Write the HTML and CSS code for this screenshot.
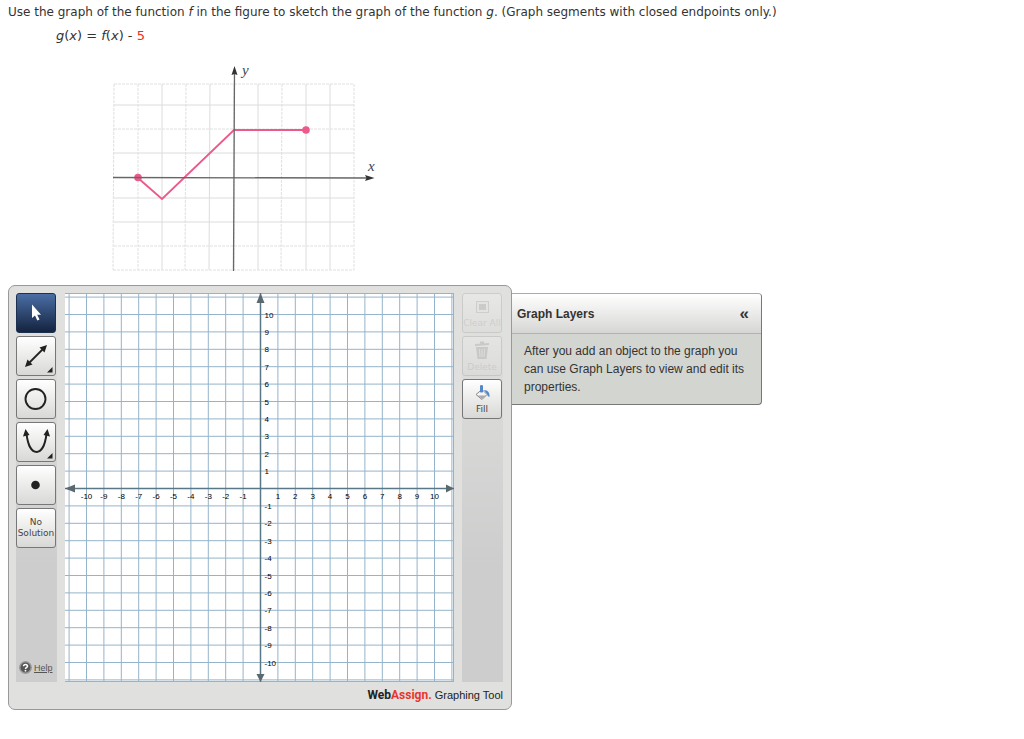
FILE: index.html
```html
<!DOCTYPE html>
<html lang="en">
<head>
  <meta charset="UTF-8">
  <meta name="viewport" content="width=device-width, initial-scale=1.0">
  <title>Graphing Tool</title>
  <link rel="stylesheet" href="styles.css">
</head>
<body>
  <div class="question">
    <p>Use the graph of the function <i>f</i> in the figure to sketch the graph of the function <i>g</i>. (Graph segments with closed endpoints only.)</p>
    <p class="formula"><i>g</i>(<i>x</i>) = <i>f</i>(<i>x</i>) - <span class="num">5</span></p>
    <svg class="figure" viewBox="0 0 290 220" role="img" aria-label="Graph of f">
      <g class="fig-grid">
        <path d="M62 24V210M110 24L109 210M158 24V210M206 24V210M230 24V210M14 45H254M14 93H254M14 138H254M14 162H254"/>
        <path class="faint" d="M14 24L13 210M38 24V210M86 24L85 210M134 24V210M182 24L181 210M254 24V210M14 24H254M14 69H254M14 186H254M13 210H254"/>
      </g>
      <path class="fig-line" d="M38 118L62 139L134 70L206 70"/>
      <circle class="fig-dot" cx="38" cy="117.500" r="3.800"/>
      <circle class="fig-dot" cx="206" cy="70" r="3.800"/>
      <path class="fig-axis" d="M13 117.500L270 118M134.500 10L133.500 211"/>
      <path class="fig-arrow" d="M134.500 6L137.500 15L134.500 14L131.500 15ZM274.500 118L265 115L266.500 118L265 121Z"/>
      <text class="fig-text" x="142" y="15">y</text>
      <text class="fig-text" x="268" y="111">x</text>
    </svg>
  </div>

  <div class="workspace">
    <div class="tool">
      <div class="tool-main">
        <div class="bar">
          <div class="btns">
            <button class="btn active" aria-label="Select">
              <svg viewBox="0 0 40 40"><path fill="#fff" d="M16 11.500V25l3-2.500 2.300 5 2.200-1-2.300-4.800h3.800z"/></svg>
            </button>
            <button class="btn" aria-label="Line">
              <svg viewBox="0 0 40 40"><path stroke="#222" stroke-width="1.800" d="M12 28L28 12"/><path fill="#222" d="M31 9l-2.500 7.500-5-5zM9 31l2.500-7.500 5 5zM36.500 31v5.500H31z"/></svg>
            </button>
            <button class="btn" aria-label="Circle">
              <svg viewBox="0 0 40 40"><circle cx="19.500" cy="20" r="10" fill="none" stroke="#222" stroke-width="1.900"/></svg>
            </button>
            <button class="btn" aria-label="Parabola">
              <svg viewBox="0 0 40 40"><path fill="none" stroke="#222" stroke-width="2" d="M10.500 12C12 24 16 30 20.500 30S29 24 30.500 12"/><path fill="#222" d="M9.500 7l4 6-6.500 1.500zM31.500 7l2.500 7.500-6.500-1.500zM36.500 31v5.500H31z"/></svg>
            </button>
            <button class="btn" aria-label="Point">
              <svg viewBox="0 0 40 40"><circle cx="19.500" cy="20" r="4.300" fill="#222"/></svg>
            </button>
            <button class="btn">No<br>Solution</button>
          </div>
          <a class="help" href="#">
            <svg viewBox="0 0 13 13"><circle cx="6.500" cy="6.500" r="5.700" fill="#555" stroke="#999" stroke-width="1.500"/><path fill="none" stroke="#fff" stroke-width="1.500" d="M4.500 5.200C4.500 2.800 8.500 2.800 8.500 5.200 8.500 6.500 6.500 6.300 6.500 8"/><circle cx="6.500" cy="9.700" r=".9" fill="#fff"/></svg>
            <span>Help</span>
          </a>
        </div>
        <svg class="plot" id="plot" viewBox="0 0 389 389" role="img" aria-label="Graph"></svg>
        <div class="bar">
          <div class="btns">
            <button class="btn" disabled>
              <svg class="small" viewBox="0 0 18 18"><rect x="3.500" y="3.500" width="12" height="11" fill="#eee" stroke="#888"/><rect x="6" y="6" width="7" height="6" fill="#777"/></svg>
              Clear All
            </button>
            <button class="btn" disabled>
              <svg class="small trash" viewBox="0 0 18 18"><path fill="#777" d="M2 3l14-1v2L2 5zM7 .500h4v2H7zM3 6h12l-1.500 12h-9z"/><path stroke="#ddd" d="M6.500 8l.5 8M9 8v8M11.500 8l-.5 8"/></svg>
              Delete
            </button>
            <button class="btn">
              <svg class="small" viewBox="0 0 18 18"><path fill="#f4f4f4" stroke="#888" d="M3 10.500l6-5 5 5-5 5z"/><path fill="#aaa" d="M5 11.500h8l-4 3.500z"/><path fill="#5588c8" d="M7 1.500q1.500-1 3 0V8q-1.500 1-3 0zM11 6c4 0 6 3 5.500 7-1.500-.5-2-1-2.500-3z"/></svg>
              Fill
            </button>
          </div>
        </div>
      </div>
      <div class="brand"><b>Web<span>Assign.</span></b> Graphing Tool</div>
    </div>

    <div class="layers">
      <div class="layers-head">
        <h2>Graph Layers</h2>
        <button aria-label="Collapse">«</button>
      </div>
      <p>After you add an object to the graph you can use Graph Layers to view and edit its properties.</p>
    </div>
  </div>

  <script>
    // graph paper from -11 to 11, labels from -10 to 10
    const plot = document.getElementById('plot');
    const mid = 195.5;
    const step = 17.4;
    let lines = '';
    let labels = '';
    for (let i = -11; i <= 11; i++) {
      const x = (mid + i * step).toFixed(1);
      const y = (mid - i * step).toFixed(1);
      if (i !== 0) {
        lines += `M${x} 0V389M0 ${y}H389`;
        if (Math.abs(i) < 11) {
          labels += `<text x="${x}" y="${mid + 10}" text-anchor="middle">${i}</text>`;
          labels += `<text x="${mid + 4}" y="${+y + 3}">${i}</text>`;
        }
      }
    }
    plot.innerHTML = `
      <path class="grid" d="${lines}M0 .5H389M0 388.5H389M388.5 0V389"/>
      <path class="axis" d="M0 ${mid}H389M${mid} 0V389"/>
      <path class="arrow" d="M0 195.500l10-4v8zM389 195.500l-8-4v8zM195.500 0l-4 10h8zM195.500 389l-4-8h8z"/>
      ${labels}`;
  </script>
</body>
</html>
```
FILE: styles.css
```css
*{
  box-sizing: border-box;
}
body{
  margin: 0 8px;
  background: #fff;
  color: #333;
  font-family: "Liberation Sans", Arial, sans-serif;
  font-size: 12px;
}
.question{
  font-family: Verdana, "DejaVu Sans", sans-serif;
  line-height: 24px;
}
.question p{
  margin: 0;
}
.question .formula{
  margin-left: 48px;
  font-size: 13px;
}
.num{
  color: #f32a1c;
}
.figure{
  display: block;
  width: 290px;
  margin: 12px 0 5px 92px;
}
.fig-grid path{
  fill: none;
  stroke: #dcdce0;
}
.fig-grid .faint{
  stroke: #e0e0e4;
  stroke-dasharray: 3 1;
}
.fig-line{
  fill: none;
  stroke: #ec5a8b;
  stroke-width: 1.8;
}
.fig-dot{
  fill: #ec5a8b;
}
.fig-axis{
  stroke: #666;
  stroke-width: 1.3;
}
.fig-arrow{
  fill: #333;
}
.fig-text{
  fill: #444;
  font: italic 15px "Liberation Serif", serif;
}

/* graphing tool */
.workspace{
  display: flex;
  align-items: flex-start;
}
.tool{
  flex: 0 1 504px;
  min-width: 0;
  padding: 7px 8px 0 7px;
  background: #e0e0de;
  border: 1px solid #999;
  border-radius: 7px;
}
.tool-main{
  display: flex;
  gap: 8px;
}
.bar{
  flex: 0 0 41px;
  display: flex;
  flex-direction: column;
  justify-content: space-between;
  background: linear-gradient(#e2e2e0, #cdcdcd 70%);
}
.btns{
  display: flex;
  flex-direction: column;
  gap: 3px;
}
.btn{
  display: flex;
  flex-direction: column;
  align-items: center;
  justify-content: center;
  width: 40px;
  height: 40px;
  padding: 0;
  border: 1px solid #777;
  border-radius: 3px;
  background: linear-gradient(#fff, #d8d8d6);
  color: #444;
  font: 9px/11px "DejaVu Sans", sans-serif;
  white-space: nowrap;
  cursor: pointer;
}
.btn svg{
  flex: none;
  width: 40px;
  height: 40px;
}
.btn .small{
  width: 18px;
  height: 18px;
  margin-bottom: 2px;
}
.btn .trash{
  height: 20px;
}
.btn.active{
  border-color: #1c3050;
  background: linear-gradient(#4a6ea5, #14233f);
}
.btn:disabled{
  opacity: .2;
  color: #888;
  cursor: default;
}
.help{
  display: flex;
  align-items: center;
  gap: 2px;
  padding: 0 0 8px 3px;
  color: #555;
  font-size: 9px;
  line-height: 12px;
}
.help svg{
  width: 13px;
  height: 13px;
}
.plot{
  flex: 1;
  min-width: 0;
  background: #fff;
  font-size: 8px;
}
.plot text{
  fill: #000;
}
.grid{
  fill: none;
  stroke: #94b4cb;
}
.axis{
  stroke: #587888;
  stroke-width: 1.5;
}
.arrow{
  fill: #5a6870;
}
.brand{
  text-align: right;
  color: #222;
  font-size: 11px;
  line-height: 27px;
}
.brand b{
  font: bold 12px Roboto, sans-serif;
}
.brand span{
  color: #e8362e;
}

/* layers panel */
.layers{
  flex: 0 1 250px;
  margin-top: 8px;
  background: #d3d5d0;
  border: 1px solid #777;
  border-top-color: #aaa;
  border-left: 0;
  border-radius: 0 4px 4px 0;
  overflow: hidden;
}
.layers-head{
  display: flex;
  align-items: center;
  justify-content: space-between;
  height: 40px;
  padding: 0 12px 0 5px;
  border-bottom: 1px solid #b0b4ae;
  background: linear-gradient(#fff, #d6d6d4);
}
.layers h2{
  margin: 0;
  font-size: 12px;
}
.layers button{
  padding: 0;
  border: 0;
  background: none;
  color: #333;
  font: bold 17px "Liberation Sans", sans-serif;
  cursor: pointer;
}
.layers p{
  margin: 0;
  padding: 8px 12px;
  line-height: 18px;
}
```
